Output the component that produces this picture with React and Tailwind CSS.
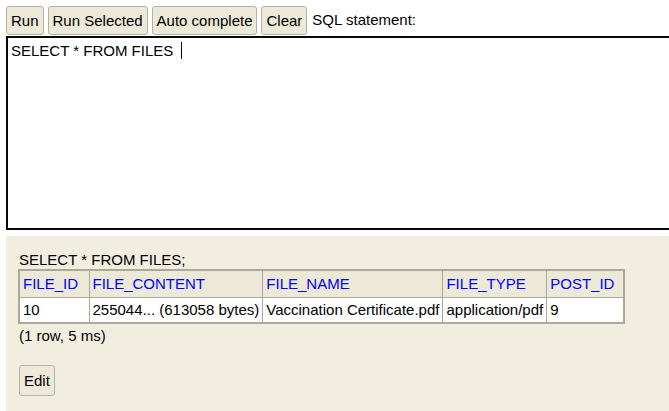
import React from 'react';

const cols = [
  { name: 'FILE_ID', w: 'w-[70px]' },
  { name: 'FILE_CONTENT', w: 'w-[173px]' },
  { name: 'FILE_NAME', w: 'w-[178px]' },
  { name: 'FILE_TYPE', w: 'w-[102px]' },
  { name: 'POST_ID', w: 'w-[77px]' },
];

const row = ['10', '255044... (613058 bytes)', 'Vaccination Certificate.pdf', 'application/pdf', '9'];

const Btn = ({ children }) => (
  <button className="h-[29px] px-[4px] bg-[#ece9d8] border border-[#b5b2a4] rounded-[3px] text-[15px] text-black leading-none">
    {children}
  </button>
);

export default function App() {
  return (
    <div className="w-[669px] h-[411px] overflow-hidden bg-white font-['Liberation_Sans',Arial,sans-serif] text-[15px] text-black">
      {/* Toolbar */}
      <div className="flex items-center gap-[4px] pl-[6px] pt-[5px] h-[35px]">
        <Btn>Run</Btn>
        <Btn>Run Selected</Btn>
        <Btn>Auto complete</Btn>
        <Btn>Clear</Btn>
        <span className="ml-[1px]">SQL statement:</span>
      </div>

      {/* Editor */}
      <div className="ml-[6px] mt-[1px] w-[700px] h-[194px] border-2 border-[#0a0a0a] px-[3px] pt-[4px] leading-[18px]">
        <span>SELECT * FROM FILES </span>
        <span className="inline-block w-px h-[17px] bg-black align-[-3px] ml-[4px]"></span>
      </div>

      {/* Result */}
      <div className="ml-[6px] mt-[6px] h-[180px] bg-[#f1eee0] pl-[12px] pt-[15px]">
        <div className="leading-[18px] ml-[1px]">SELECT * FROM FILES;</div>
        <table className="border-collapse border-2 border-[#aca899]">
          <thead>
            <tr className="bg-[#ece9d8] h-[27px]">
              {cols.map((c) => (
                <th key={c.name} className={`${c.w} border border-[#aca899] text-left font-normal text-[#0000ff] px-[3px]`}>
                  {c.name}
                </th>
              ))}
            </tr>
          </thead>
          <tbody>
            <tr className="bg-white h-[26px]">
              {row.map((v, i) => (
                <td key={i} className="border border-[#aca899] px-[3px] whitespace-nowrap">{v}</td>
              ))}
            </tr>
          </tbody>
        </table>
        <div className="mt-[3px] ml-[1px] leading-[18px]">(1 row, 5 ms)</div>
        <div className="mt-[20px] ml-[1px]">
          <button className="h-[31px] px-[4px] bg-[#ece9d8] border border-[#b5b2a4] rounded-[3px] text-[15px] leading-none">Edit</button>
        </div>
      </div>
    </div>
  );
}
